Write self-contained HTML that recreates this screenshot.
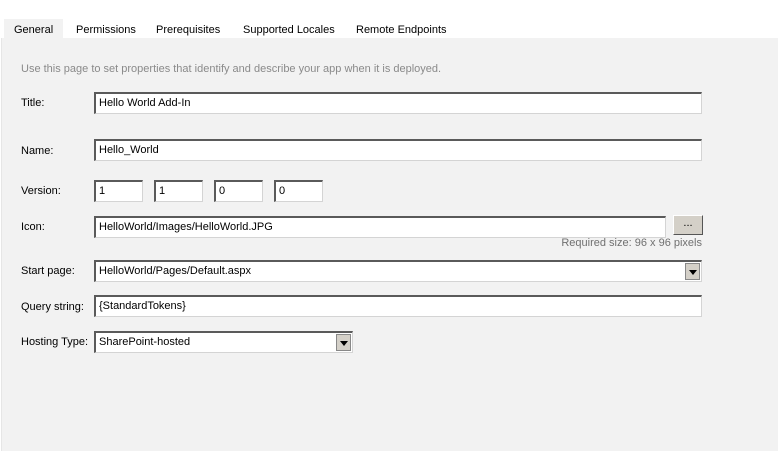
<!DOCTYPE html>
<html><head><style>
body{margin:0;width:778px;height:451px;background:#fff;font-family:"Liberation Sans",sans-serif;font-size:11px;color:#000;position:relative;overflow:hidden}
.a{position:absolute;white-space:nowrap}
.panel{position:absolute;left:1px;top:38px;width:777px;height:413px;background:#f2f2f2;border-left:1px solid #e6e6e6}
.tab{position:absolute;top:24px}
.in{position:absolute;background:#fff;border-top:2px solid #5a5a5a;border-left:2px solid #5a5a5a;border-bottom:1px solid #d4d4d4;border-right:1px solid #d4d4d4;box-sizing:border-box;padding:3px 0 0 3px;height:22px}
.lbl{position:absolute;left:21px}
.dd{position:absolute;width:15px;height:17px;background:#d4d0c8;border:1px solid #888;box-sizing:border-box;top:1px;right:1px}
.dd:after{content:"";position:absolute;left:3px;top:6px;border-left:4px solid transparent;border-right:4px solid transparent;border-top:5px solid #000}
</style></head><body>
<div class="a" style="left:4px;top:19px;width:59px;height:20px;background:#f2f2f2"></div>
<div class="panel"></div>
<div class="a tab" style="left:14px">General</div>
<div class="a tab" style="left:76px">Permissions</div>
<div class="a tab" style="left:156px">Prerequisites</div>
<div class="a tab" style="left:243px">Supported Locales</div>
<div class="a tab" style="left:356px">Remote Endpoints</div>
<div class="a" style="left:21px;top:63px;color:#8a8a8a">Use this page to set properties that identify and describe your app when it is deployed.</div>

<div class="a lbl" style="top:97px">Title:</div>
<div class="in" style="left:94px;top:92px;width:608px">Hello World Add-In</div>

<div class="a lbl" style="top:145px">Name:</div>
<div class="in" style="left:94px;top:139px;width:608px">Hello_World</div>

<div class="a lbl" style="top:185px">Version:</div>
<div class="in" style="left:94px;top:180px;width:49px">1</div>
<div class="in" style="left:154px;top:180px;width:49px">1</div>
<div class="in" style="left:214px;top:180px;width:49px">0</div>
<div class="in" style="left:274px;top:180px;width:49px">0</div>

<div class="a lbl" style="top:221px">Icon:</div>
<div class="in" style="left:94px;top:216px;width:572px">HelloWorld/Images/HelloWorld.JPG</div>
<div class="a" style="left:673px;top:215px;width:30px;height:20px;background:#d4d0c8;border:1px solid #fff;border-right-color:#555;border-bottom-color:#555;box-sizing:border-box;text-align:center;line-height:14px">...</div>
<div class="a" style="right:76px;top:237px;color:#707070">Required size: 96 x 96 pixels</div>

<div class="a lbl" style="top:265px">Start page:</div>
<div class="in" style="left:94px;top:260px;width:608px">HelloWorld/Pages/Default.aspx<div class="dd"></div></div>

<div class="a lbl" style="top:301px">Query string:</div>
<div class="in" style="left:94px;top:295px;width:608px">{StandardTokens}</div>

<div class="a lbl" style="top:336px">Hosting Type:</div>
<div class="in" style="left:94px;top:331px;width:259px">SharePoint-hosted<div class="dd"></div></div>
</body></html>
